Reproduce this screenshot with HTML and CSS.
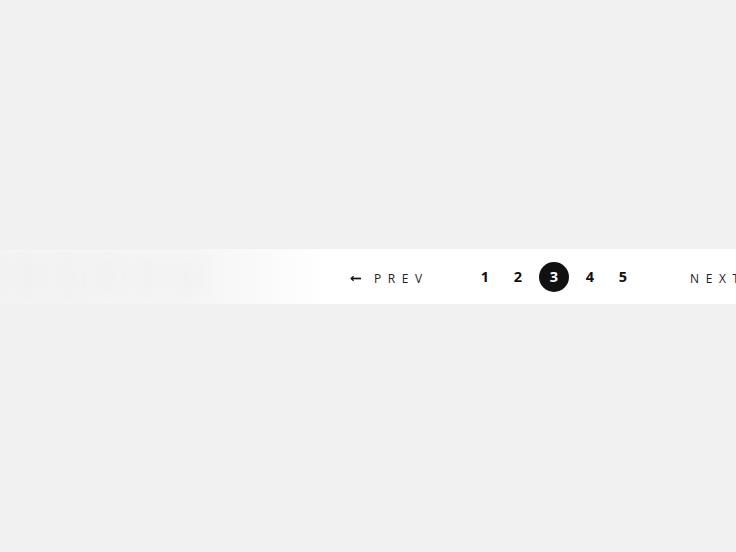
FILE: index.html
```html
<!DOCTYPE html>
<html lang="en">
<head>
  <meta charset="UTF-8">
  <meta name="viewport" content="width=device-width, initial-scale=1.0">
  <title>Pagination</title>
  <link rel="stylesheet" href="styles.css">
</head>
<body>
  <div class="pager">
    <div class="ghost"></div>
    <a class="nav prev" href="#">
      <svg class="arrow" width="11" height="7" viewBox="0 0 11 7">
        <path d="M1.2 3.5H11" stroke="#111" stroke-width="1.7" fill="none"/>
        <path d="M3.6 1.2L1.2 3.5L3.6 5.8" stroke="#111" stroke-width="1.3" fill="none"/>
      </svg>
      <span>PREV</span>
    </a>
    <div class="pages">
      <a class="page" href="#">1</a>
      <a class="page" href="#">2</a>
      <a class="page active" href="#">3</a>
      <a class="page" href="#">4</a>
      <a class="page" href="#">5</a>
    </div>
    <a class="nav next" href="#">NEXT</a>
  </div>
</body>
</html>
```

FILE: styles.css
```css
body {
  margin: 0;
  background: #f1f1f1;
  font-family: "Open Sans", Arial, sans-serif;
  overflow: hidden;
}

.pager {
  position: relative;
  margin-top: 249px;
  height: 55px;
  width: 900px;
  display: flex;
  align-items: center;
  padding-left: 350px;
  box-sizing: border-box;
  background: linear-gradient(to right, #f3f3f3 0, #f5f5f5 190px, #fcfcfc 290px, #fff 330px);
  box-shadow: 0 5px 9px rgba(0,0,0,0.06);
}

/* blurred trail on the left end */
.ghost {
  position: absolute;
  left: 0;
  top: 8px;
  width: 210px;
  height: 40px;
  background: repeating-linear-gradient(to right, #eeeeee 0, #f3f3f3 14px, #ececec 26px, #f4f4f4 40px);
  filter: blur(4px);
  opacity: 0.3;
}

a {
  color: #111;
  text-decoration: none;
}

.nav {
  display: flex;
  align-items: center;
  font-size: 12px;
  letter-spacing: 6.6px;
  color: #222;
  padding-top: 4px;
}

.prev {
  width: 120px;
}

.prev .arrow {
  margin: 0 13px 1px 0;
}

.pages {
  display: flex;
  align-items: center;
  gap: 3px;
}

.page {
  width: 30px;
  height: 30px;
  display: flex;
  align-items: center;
  justify-content: center;
  font-size: 14.5px;
  font-weight: 700;
}

.page.active {
  background: #111;
  color: #fff;
  border-radius: 50%;
  margin: 0 3px;
}

.next {
  margin-left: 52px;
}
```
